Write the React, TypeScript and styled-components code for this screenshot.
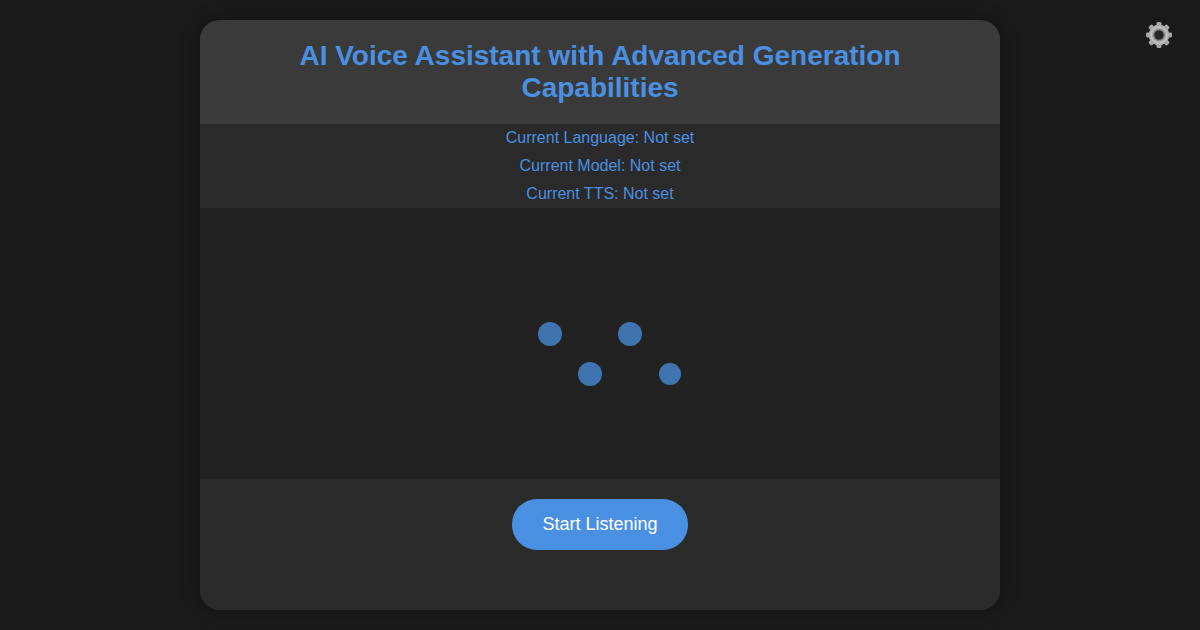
import React from "react";
import styled, { createGlobalStyle } from "styled-components";

const Global = createGlobalStyle`
  html, body { margin: 0; padding: 0; height: 100%; background: #1a1a1a; }
  body { font-family: "Liberation Sans", Arial, sans-serif; overflow: hidden; }
  #root { height: 100%; }
`;

const Page = styled.div`
  height: 630px;
  display: flex;
  align-items: center;
  justify-content: center;
  position: relative;
`;

const Card = styled.main`
  width: 800px;
  height: 590px;
  display: flex;
  flex-direction: column;
  border-radius: 20px;
  overflow: hidden;
  background: #2a2a2a;
  box-shadow: 0 0 20px rgba(0, 0, 0, 0.3);
`;

const Header = styled.header`
  background: #3a3a3a;
  padding: 20px;
`;

const Title = styled.h1`
  margin: 0;
  font-size: 28px;
  line-height: 32px;
  font-weight: 700;
  color: #4a90e2;
  text-align: center;
`;

const Info = styled.section`
  background: #2a2a2a;
  display: flex;
  flex-direction: column;
`;

const InfoLine = styled.div`
  height: 28px;
  line-height: 28px;
  font-size: 16px;
  text-align: center;
  color: #4a90e2;
`;

const Stage = styled.section`
  flex: 1;
  background: #222222;
  display: flex;
  align-items: center;
  justify-content: center;
`;

const Dots = styled.div`
  display: grid;
  grid-template-columns: repeat(4, 24px);
  grid-auto-rows: 24px;
  column-gap: 16px;
  row-gap: 16px;
  margin: 20px 0 0 20px;
`;

const Dot = styled.span<{ $col: number; $row: number; $size?: number }>`
  grid-column: ${(p) => p.$col};
  grid-row: ${(p) => p.$row};
  width: ${(p) => p.$size ?? 24}px;
  height: ${(p) => p.$size ?? 24}px;
  place-self: center;
  border-radius: 50%;
  background: #4a90e2;
  opacity: 0.75;
`;

const Footer = styled.footer`
  height: 131px;
  box-sizing: border-box;
  padding-top: 20px;
  display: flex;
  justify-content: center;
  align-items: flex-start;
  background: #2a2a2a;
`;

const Button = styled.button`
  width: 176px;
  height: 51px;
  border: none;
  border-radius: 25px;
  background: #4a90e2;
  color: #ffffff;
  font-family: inherit;
  font-size: 18px;
`;

const Settings = styled.button`
  position: absolute;
  top: 19px;
  left: 1143px;
  width: 32px;
  height: 32px;
  padding: 0;
  border: none;
  background: none;
  display: block;
`;

const GearIcon = styled.svg`
  display: block;
  filter: blur(0.6px);
`;

function Gear() {
  const teeth = Array.from({ length: 8 }, (_, i) => i * 45);
  return (
    <GearIcon width="32" height="32" viewBox="0 0 32 32">
      <defs>
        <radialGradient id="g" cx="50%" cy="50%" r="50%">
          <stop offset="45%" stopColor="#6f6f6f" />
          <stop offset="72%" stopColor="#c4c4c4" />
          <stop offset="100%" stopColor="#a0a0a0" />
        </radialGradient>
      </defs>
      {teeth.map((a) => (
        <rect key={a} x="13.5" y="3" width="5" height="6" rx="1.4" fill="#a8a8a8" transform={`rotate(${a} 16 16)`} />
      ))}
      <circle cx="16" cy="16" r="10.4" fill="url(#g)" />
      <circle cx="16" cy="16" r="4.6" fill="#262626" />
    </GearIcon>
  );
}

export default function App() {
  return (
    <Page>
      <Global />
      <Card>
        <Header>
          <Title>AI Voice Assistant with Advanced Generation Capabilities</Title>
        </Header>
        <Info>
          <InfoLine>Current Language: Not set</InfoLine>
          <InfoLine>Current Model: Not set</InfoLine>
          <InfoLine>Current TTS: Not set</InfoLine>
        </Info>
        <Stage>
          <Dots>
            <Dot $col={1} $row={1} />
            <Dot $col={3} $row={1} />
            <Dot $col={2} $row={2} />
            <Dot $col={4} $row={2} $size={22} />
          </Dots>
        </Stage>
        <Footer>
          <Button>Start Listening</Button>
        </Footer>
      </Card>
      <Settings aria-label="Settings">
        <Gear />
      </Settings>
    </Page>
  );
}
